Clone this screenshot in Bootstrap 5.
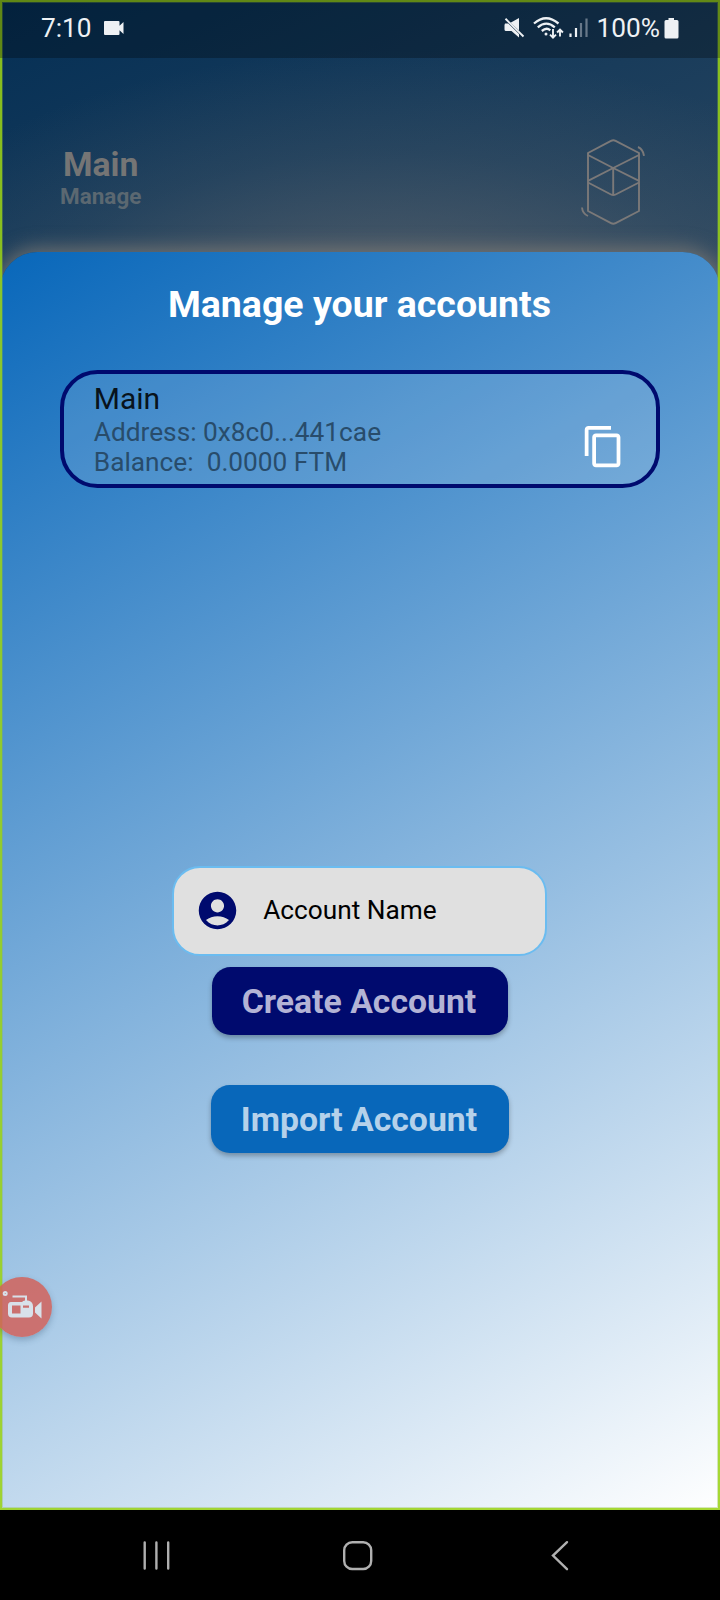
<!DOCTYPE html>
<html lang="en">
<head>
<meta charset="utf-8">
<meta name="viewport" content="width=device-width, initial-scale=1">
<title>Manage your accounts</title>
<link href="https://cdn.jsdelivr.net/npm/bootstrap@5.3.0/dist/css/bootstrap.min.css" rel="stylesheet">
<style>
  body { font-family: Roboto, "Noto Sans", sans-serif; background: #000; line-height: 1; }
  svg { display: block; flex: none; }
  .phone { width: 720px; height: 1600px; }
  .app-screen {
    height: 1510px;
    background:
      radial-gradient(ellipse 560px 290px at 390px 340px, rgba(112,112,114,.66), rgba(112,112,114,.46) 32%, rgba(104,108,112,.2) 65%, transparent),
      linear-gradient(155.8deg, #042f55, #757575);
  }
  .capture-frame { inset: 0; border: 2px solid rgba(154,210,22,.87); box-shadow: inset 0 0 0 1px rgba(140,190,60,.35); z-index: 2; pointer-events: none; }
  .status-bar { height: 58px; padding: 0 41px 2px 41px; background: rgba(0,0,0,.28); color: #eef1f4; font-size: 26.25px; z-index: 3; }
  .cam-icon { margin-left: 12.5px; }
  .battery-icon { margin-left: 4px; }
  .page-head { height: 194px; padding: 0 74.5px 0 60px; color: #757575; }
  .wallet { padding-top: 87px; }
  .wallet-name { font-size: 33.75px; line-height: 40px; }
  .wallet-manage { font-size: 22.5px; line-height: 22px; color: #5b6871; }
  .fantom-logo { margin-top: 80px; }
  .sheet {
    border-radius: 37.5px 37.5px 0 0;
    background: linear-gradient(150.2deg, #0867ba, #fff);
    box-shadow: 0 0 19px 4px rgba(125,122,118,.8);
    clip-path: inset(-40px 0 0 0);
  }
  .sheet-title { font-size: 37.5px; line-height: 44px; margin: 30px 1px 44px 0; color: #fff; }
  .account-card { width: 600px; height: 117.5px; border: 4px solid #000a6e; border-radius: 37.5px; background: rgba(255,255,255,.12) padding-box; padding: 0 30px 0 29.8px; }
  .account-title { font-size: 30px; line-height: 36px; color: #08131c; }
  .account-line { font-size: 26.25px; line-height: 30px; color: #284c6b; white-space: pre; }
  .copy-icon { margin-top: 35px; }
  .name-field { width: 375px; height: 90px; margin: 378px 1px 0 0; border: 2px solid #6bbcf0; border-radius: 28px; background: #e0e0e0; padding-left: 21px; gap: 23.2px; font-size: 26.25px; color: #000; }
  .wide-btn { height: 67.5px; border: 0; border-radius: 18.75px; font-size: 33.75px; font-weight: 700; line-height: 1; padding: 2px 2px 0 0; box-shadow: 0 3px 5px rgba(0,0,0,.28); }
  .create { width: 296px; background: #000a6e; color: #b3b3d5; margin-top: 11.5px; padding-top: 3px; }
  .import { width: 298px; background: #0867ba; color: #b5d1ea; margin-top: 50.5px; }
  .rec-bubble { left: -8px; top: 1277px; width: 60px; height: 60px; border-radius: 50%; background: rgba(209,98,90,.85); box-shadow: 0 3px 6px rgba(40,70,100,.3); z-index: 4; }
  .sys-nav { height: 90px; background: #000; }
</style>
</head>
<body>
<div class="phone d-flex flex-column position-relative overflow-hidden">
  <main class="app-screen d-flex flex-column position-relative overflow-hidden">
    <div class="capture-frame position-absolute"></div>

    <header class="status-bar d-flex align-items-center justify-content-between position-relative">
      <div class="d-flex align-items-center">
        <span>7:10</span>
        <svg class="cam-icon" width="20" height="14" viewBox="0 0 20 14" fill="currentColor"><path d="M1 0h13.500q1 0 1 1v3.800L19.500 1v12l-4-3.800V13q0 1-1 1H1q-1 0-1-1V1q0-1 1-1z"/></svg>
      </div>
      <div class="d-flex align-items-center">
        <svg width="93" height="24" viewBox="504 16 93 24" fill="none" stroke="currentColor">
          <path fill="currentColor" stroke="none" d="M519 18v12.500l-8.500-7.800zM505 23.500h3.300L519 34v3.500L511.500 31H506q-1.500 0-1.500-1.500V25z"/>
          <path stroke-width="1.900" d="M505.500 18.800 523.500 36.500"/>
          <path stroke-width="2.300" d="M534 23.500q12-10.500 24.500 0M537.800 27.300q8.500-7.300 17 0M541.800 31q4.700-4 8.500-.7"/>
          <circle cx="546" cy="34" r="1.500" fill="currentColor" stroke="none"/>
          <path stroke-width="1.900" d="M553 29v8.500m-3-2.800 3 3 3-3M560 36.500V30m-2.900 2.500 2.900-3 2.900 3"/>
          <path stroke-width="2.200" d="M570.500 33.500V37M576 28v9"/>
          <path stroke-width="2.200" opacity=".4" d="M581 23v14M586.500 18.500V37"/>
        </svg>
        <span>100%</span>
        <svg class="battery-icon" width="15" height="21" viewBox="0 0 15 21" fill="currentColor"><path d="M4.500 0h5.500v2h3q1.500 0 1.500 1.500V19q0 1.500-1.500 1.500H2Q.5 20.500.5 19V3.500Q.5 2 2 2h2.500z"/></svg>
      </div>
    </header>

    <section class="page-head d-flex justify-content-between">
      <div class="wallet text-center fw-bold">
        <div class="wallet-name">Main</div>
        <div class="wallet-manage">Manage</div>
      </div>
      <svg class="fantom-logo" width="66" height="88" viewBox="580 138 66 88" fill="none" stroke="#7b7979" stroke-width="1.900" stroke-linejoin="round">
        <path d="M588 153 611 140.800q2.300-1.200 4.600 0L639 153v58l-23.400 12.200q-2.300 1.200-4.600 0L588 211z"/>
        <path d="M588 155 613.200 168 639 155M588 180.800 613.200 168 639 180.800M588 182.500l23 12q2.300 1.200 4.600 0l23.400-12M613.200 167v27.500"/>
        <path d="M638 147q5 2 6 8.800M582 207.500q.5 6 6 8.500"/>
      </svg>
    </section>

    <section class="sheet flex-grow-1 d-flex flex-column align-items-center">
      <h1 class="sheet-title fw-bold text-center">Manage your accounts</h1>
      <div class="account-card d-flex align-items-center justify-content-between">
        <div>
          <div class="account-title">Main</div>
          <div class="account-line">Address: 0x8c0...441cae</div>
          <div class="account-line">Balance:  0.0000 FTM</div>
        </div>
        <svg class="copy-icon" width="45" height="45" viewBox="0 0 24 24" fill="#fff"><path d="M16 1H4c-1.100 0-2 .9-2 2v14h2V3h12V1zm3 4H8c-1.100 0-2 .9-2 2v14c0 1.100.9 2 2 2h11c1.100 0 2-.9 2-2V7c0-1.100-.9-2-2-2zm0 16H8V7h11v14z"/></svg>
      </div>

      <div class="name-field d-flex align-items-center">
        <svg width="45" height="45" viewBox="0 0 24 24" fill="#000a6e"><path d="M12 2C6.480 2 2 6.480 2 12s4.480 10 10 10 10-4.480 10-10S17.520 2 12 2zm0 4c1.930 0 3.500 1.570 3.500 3.500S13.930 13 12 13s-3.500-1.570-3.500-3.500S10.070 6 12 6zm0 14c-2.030 0-4.430-.82-6.140-2.880C7.550 15.800 9.680 15 12 15s4.450.8 6.140 2.120C16.430 19.180 14.030 20 12 20z"/></svg>
        <span>Account Name</span>
      </div>
      <button type="button" class="btn wide-btn create">Create Account</button>
      <button type="button" class="btn wide-btn import">Import Account</button>
    </section>
  </main>

  <div class="rec-bubble position-absolute">
    <svg width="60" height="60" viewBox="-8 1277 60 60" fill="none" stroke="#d8e1ea">
      <circle cx="5.200" cy="1293.500" r="1.500" stroke-width="2"/>
      <path stroke-width="2" d="M12.500 1296.500H26v5"/>
      <path fill="#d8e1ea" stroke="none" fill-rule="evenodd" d="M11 1302h11q1-1.500 3-1.500h3q5 1 5 6v7q0 4-4 4H12q-4 0-4-4v-8q0-3.500 3-3.500zm1 3.500v8h8.500v-8zm11 0v2.300h6v-2.300zM35 1307.500l6.500-6v17l-6.500-6z"/>
    </svg>
  </div>

  <nav class="sys-nav d-flex">
    <svg width="720" height="90" viewBox="0 1510 720 90" fill="none" stroke="#b0b0b0" stroke-width="2.400" stroke-linecap="round">
      <path d="M144.700 1542.500v26M156.400 1542.500v26M168.200 1542.500v26"/>
      <rect x="344.200" y="1542.200" width="27" height="26.800" rx="8"/>
      <path d="M567 1542.200 553 1555.600l14 13.600"/>
    </svg>
  </nav>
</div>
<script src="https://cdn.jsdelivr.net/npm/bootstrap@5.3.0/dist/js/bootstrap.bundle.min.js"></script>
</body>
</html>
